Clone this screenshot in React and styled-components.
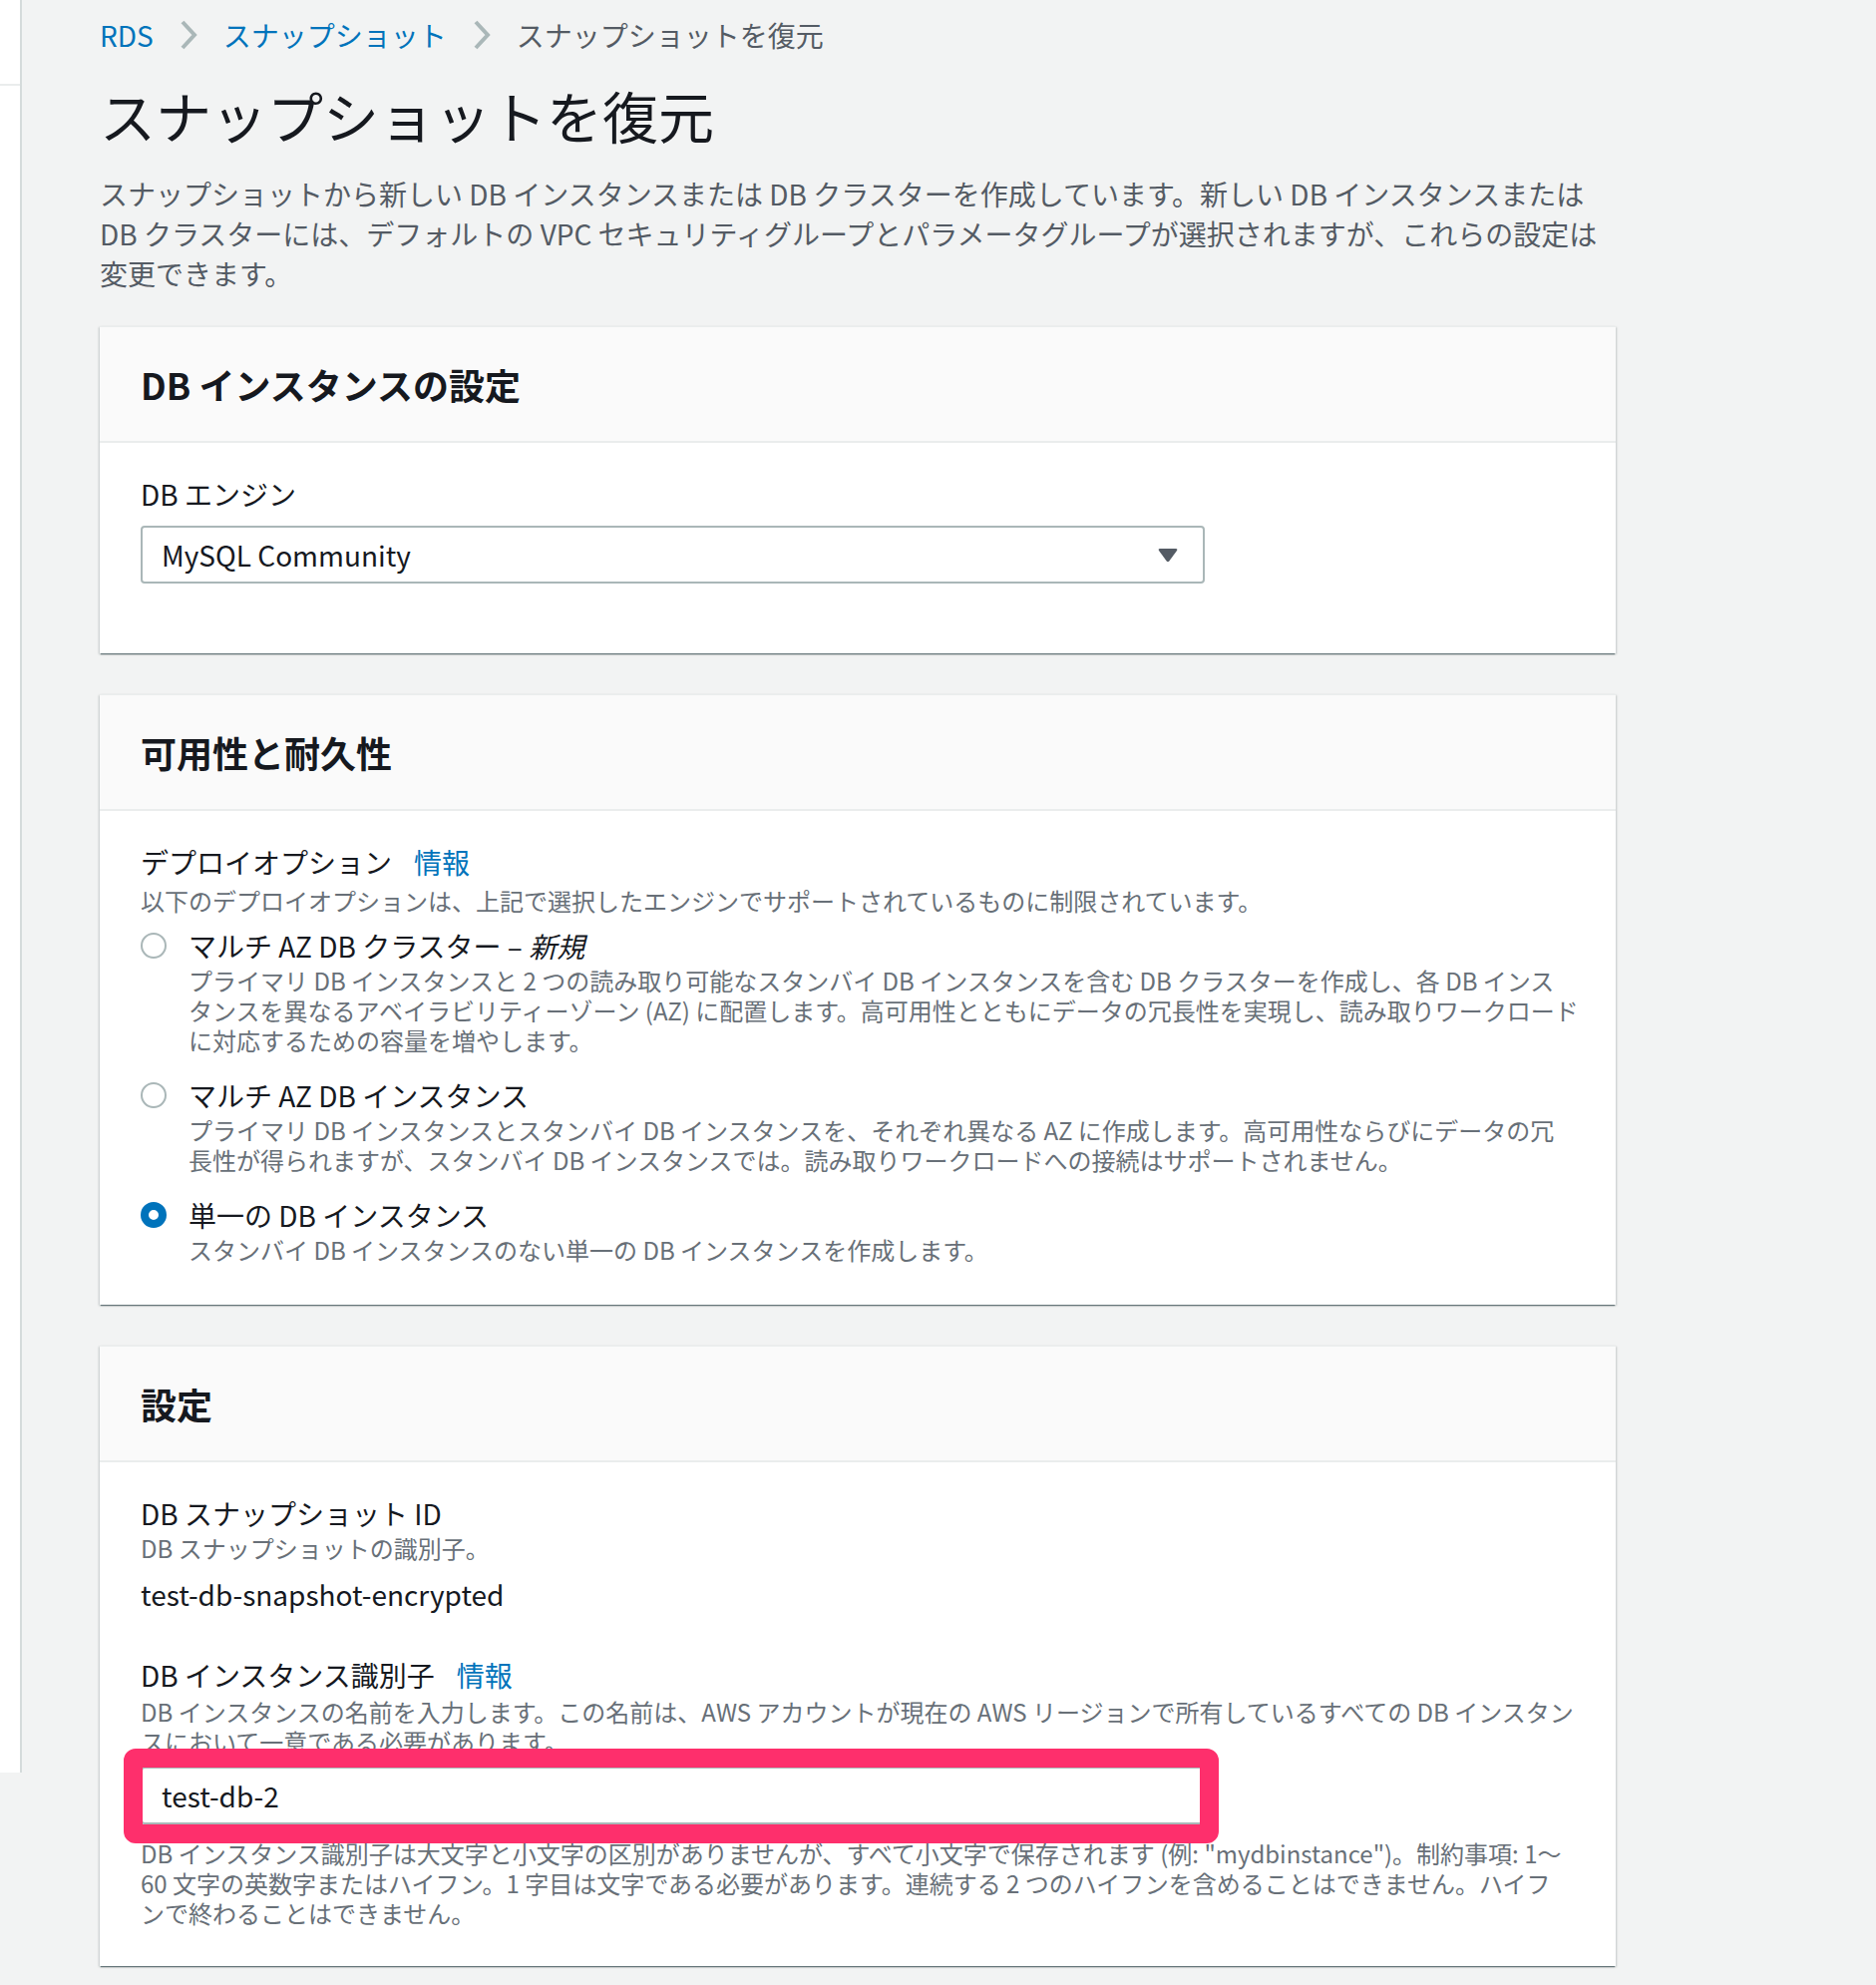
import styled, { createGlobalStyle } from "styled-components";

const GlobalStyle = createGlobalStyle`
  body {
    margin: 0;
    background: #f2f3f3;
    font-family: "Noto Sans CJK JP", "Noto Sans", sans-serif;
    color: #16191f;
  }
`;

const Page = styled.div`
  display: flex;
  align-items: flex-start;
  min-height: 1990px;
`;

const SideNav = styled.div`
  flex-shrink: 0;
  width: 20px;
  height: 1777px;
  background: #fff;
  border-right: 2px solid #d5dbdb;
`;

const SideNavTop = styled.div`
  height: 84px;
  border-bottom: 2px solid #eaeded;
`;

const Main = styled.main`
  width: 1520px;
  padding: 15px 0 0 78px;
`;

const Breadcrumbs = styled.nav`
  display: flex;
  align-items: center;
  gap: 26px;
  height: 40px;
  font-size: 28px;
  line-height: 40px;
`;

const Crumb = styled.span`
  color: ${(p) => (p.$current ? "#545b64" : "#0073bb")};
`;

const Title = styled.h1`
  margin: 27px 0 0;
  font-size: 56px;
  line-height: 66px;
  font-weight: 400;
  color: #16191f;
`;

const Intro = styled.p`
  margin: 26px 0 0;
  font-size: 28px;
  line-height: 40px;
  color: #545b64;
  white-space: pre;
`;

const Cards = styled.div`
  display: flex;
  flex-direction: column;
  gap: 41px;
  margin-top: 33px;
  padding-bottom: 19px;
`;

const Card = styled.section`
  background: #fff;
  border-top: 1px solid #eaeded;
  box-shadow: 0 2px 1px -1px rgba(0, 28, 36, 0.45), 1px 1px 2px rgba(0, 28, 36, 0.18),
    -1px 1px 2px rgba(0, 28, 36, 0.18);
`;

const CardHeader = styled.header`
  display: flex;
  align-items: center;
  height: 114px;
  padding: 0 41px;
  background: #fafafa;
  border-bottom: 2px solid #eaeded;

  h2 {
    margin: 0;
    font-size: 36px;
    line-height: 44px;
    font-weight: 700;
    color: #16191f;
  }
`;

const CardBody = styled.div`
  padding: 31px 41px ${(p) => p.$bottom}px;
`;

const Label = styled.div`
  display: flex;
  align-items: baseline;
  font-size: 28px;
  line-height: 40px;
  color: #16191f;
  margin-top: ${(p) => p.$top || 0}px;
`;

const InfoLink = styled.a`
  margin-left: 22px;
  color: #0073bb;
  text-decoration: none;
`;

const Desc = styled.div`
  font-size: 24px;
  line-height: 30px;
  color: #687078;
  white-space: pre;
  margin-top: ${(p) => p.$top || 0}px;
`;

const Select = styled.div`
  box-sizing: border-box;
  display: flex;
  align-items: center;
  justify-content: space-between;
  width: 1067px;
  height: 58px;
  margin-top: 12px;
  padding: 0 25px 0 19px;
  border: 2px solid #aab7b8;
  border-radius: 4px;
  font-size: 28px;
  color: #16191f;
`;

const RadioGroup = styled.div`
  display: flex;
  flex-direction: column;
  gap: 20px;
  margin-top: 10px;
`;

const RadioOption = styled.label`
  display: grid;
  grid-template-columns: 26px 1fr;
  column-gap: 22px;
`;

const RadioCircle = styled.span`
  box-sizing: border-box;
  width: 26px;
  height: 26px;
  margin-top: 7px;
  border-radius: 50%;
  background: #fff;
  border: ${(p) => (p.$checked ? "8px solid #0073bb" : "2px solid #aab7b8")};
`;

const RadioTitle = styled.div`
  font-size: 28px;
  line-height: 40px;
  color: #16191f;

  em {
    font-style: italic;
  }
`;

const Value = styled.div`
  margin-top: 11px;
  font-size: 28px;
  line-height: 40px;
  color: #16191f;
`;

const InputWrap = styled.div`
  position: relative;
  width: 1067px;
  margin-top: 10px;
`;

const Input = styled.div`
  box-sizing: border-box;
  display: flex;
  align-items: center;
  height: 58px;
  padding: 0 19px;
  border: 2px solid #aab7b8;
  border-radius: 4px;
  font-size: 28px;
  color: #16191f;
`;

const Highlight = styled.div`
  position: absolute;
  top: -18px;
  left: -17px;
  right: -14px;
  bottom: -19px;
  border: 19px solid #fe2f6c;
  border-radius: 12px;
  pointer-events: none;
`;

const Chevron = () => (
  <svg width="18" height="30" viewBox="0 0 18 30">
    <polyline points="3,2 15,15 3,28" fill="none" stroke="#aab7b8" strokeWidth="4" />
  </svg>
);

const Caret = () => (
  <svg width="20" height="15" viewBox="0 0 20 15">
    <path d="M2 1 H18 Q20 1 19 3 L11.3 13.5 Q10 15 8.7 13.5 L1 3 Q0 1 2 1 Z" fill="#545b64" />
  </svg>
);

function Radio({ checked, title, desc }) {
  return (
    <RadioOption>
      <RadioCircle $checked={checked} />
      <div>
        <RadioTitle>{title}</RadioTitle>
        <Desc>{desc}</Desc>
      </div>
    </RadioOption>
  );
}

export default function App() {
  return (
    <>
      <GlobalStyle />
      <Page>
        <SideNav>
          <SideNavTop />
        </SideNav>
        <Main>
          <Breadcrumbs>
            <Crumb>RDS</Crumb>
            <Chevron />
            <Crumb>スナップショット</Crumb>
            <Chevron />
            <Crumb $current>スナップショットを復元</Crumb>
          </Breadcrumbs>
          <Title>スナップショットを復元</Title>
          <Intro>
            {"スナップショットから新しい DB インスタンスまたは DB クラスターを作成しています。新しい DB インスタンスまたは\nDB クラスターには、デフォルトの VPC セキュリティグループとパラメータグループが選択されますが、これらの設定は\n変更できます。"}
          </Intro>

          <Cards>
            <Card>
              <CardHeader>
                <h2>DB インスタンスの設定</h2>
              </CardHeader>
              <CardBody $bottom={70}>
                <Label>DB エンジン</Label>
                <Select>
                  <span>MySQL Community</span>
                  <Caret />
                </Select>
              </CardBody>
            </Card>

            <Card>
              <CardHeader>
                <h2>可用性と耐久性</h2>
              </CardHeader>
              <CardBody $bottom={40}>
                <Label>
                  デプロイオプション<InfoLink>情報</InfoLink>
                </Label>
                <Desc $top={4}>
                  以下のデプロイオプションは、上記で選択したエンジンでサポートされているものに制限されています。
                </Desc>
                <RadioGroup>
                  <Radio
                    title={
                      <>
                        マルチ AZ DB クラスター – <em>新規</em>
                      </>
                    }
                    desc={
                      "プライマリ DB インスタンスと 2 つの読み取り可能なスタンバイ DB インスタンスを含む DB クラスターを作成し、各 DB インス\nタンスを異なるアベイラビリティーゾーン (AZ) に配置します。高可用性とともにデータの冗長性を実現し、読み取りワークロード\nに対応するための容量を増やします。"
                    }
                  />
                  <Radio
                    title="マルチ AZ DB インスタンス"
                    desc={
                      "プライマリ DB インスタンスとスタンバイ DB インスタンスを、それぞれ異なる AZ に作成します。高可用性ならびにデータの冗\n長性が得られますが、スタンバイ DB インスタンスでは。読み取りワークロードへの接続はサポートされません。"
                    }
                  />
                  <Radio
                    checked
                    title="単一の DB インスタンス"
                    desc="スタンバイ DB インスタンスのない単一の DB インスタンスを作成します。"
                  />
                </RadioGroup>
              </CardBody>
            </Card>

            <Card>
              <CardHeader>
                <h2>設定</h2>
              </CardHeader>
              <CardBody $bottom={38}>
                <Label>DB スナップショット ID</Label>
                <Desc>DB スナップショットの識別子。</Desc>
                <Value>test-db-snapshot-encrypted</Value>

                <Label $top={41}>
                  DB インスタンス識別子<InfoLink>情報</InfoLink>
                </Label>
                <Desc $top={2}>
                  {"DB インスタンスの名前を入力します。この名前は、AWS アカウントが現在の AWS リージョンで所有しているすべての DB インスタン\nスにおいて一意である必要があります。"}
                </Desc>
                <InputWrap>
                  <Input>test-db-2</Input>
                  <Highlight />
                </InputWrap>
                <Desc $top={14}>
                  {"DB インスタンス識別子は大文字と小文字の区別がありませんが、すべて小文字で保存されます (例: \"mydbinstance\")。制約事項: 1～\n60 文字の英数字またはハイフン。1 字目は文字である必要があります。連続する 2 つのハイフンを含めることはできません。ハイフ\nンで終わることはできません。"}
                </Desc>
              </CardBody>
            </Card>
          </Cards>
        </Main>
      </Page>
    </>
  );
}
